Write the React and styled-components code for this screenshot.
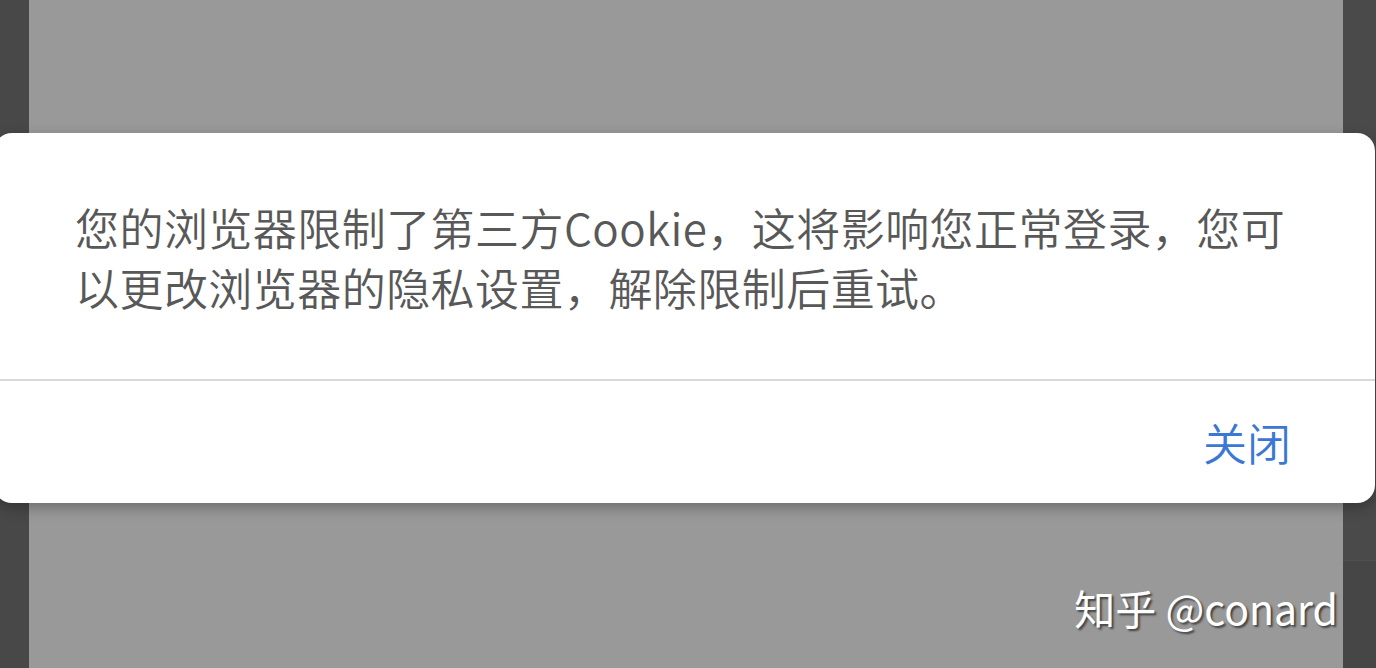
import React from 'react'
import styled, { createGlobalStyle } from 'styled-components'

const GlobalStyle = createGlobalStyle`
  html, body {
    margin: 0;
    padding: 0;
    background: #999999;
    overflow: hidden;
  }
  * {
    box-sizing: border-box;
  }
`

const App = () => {
  return (
    <>
      <GlobalStyle />
      <Screen>
        <SideBar />
        <Backdrop />
        <RightBar>
          <RightBarTop />
          <RightBarBottom />
        </RightBar>

        <Dialog>
          <Message>
            您的浏览器限制了第三方Cookie，这将影响您正常登录，您可以更改浏览器的隐私设置，解除限制后重试。
          </Message>
          <Divider />
          <Actions>
            <CloseButton>关闭</CloseButton>
          </Actions>
        </Dialog>

        <Watermark>知乎 @conard</Watermark>
      </Screen>
    </>
  )
}

export default App

const Screen = styled.div`
  position: relative;
  display: flex;
  width: 1376px;
  height: 668px;
  overflow: hidden;
  font-family: "Noto Sans CJK SC", "Noto Sans", sans-serif;
`

const SideBar = styled.div`
  width: 29px;
  background: #484848;
`

const Backdrop = styled.div`
  flex: 1;
  background: #999999;
`

const RightBar = styled.div`
  width: 33px;
  display: flex;
  flex-direction: column;
`

const RightBarTop = styled.div`
  height: 560px;
  background: #4a4a4a;
`

const RightBarBottom = styled.div`
  flex: 1;
  background: #464646;
  border-top: 1px solid #505050;
`

const Dialog = styled.div`
  position: absolute;
  top: 133px;
  left: -6px;
  width: 1381px;
  height: 370px;
  background: #ffffff;
  border-radius: 18px;
  box-shadow: 0 5px 14px rgba(0, 0, 0, 0.28);
  display: flex;
  flex-direction: column;
`

const Message = styled.div`
  padding: 64px 80px 0 81px;
  height: 246px;
  font-size: 44px;
  font-weight: 350;
  letter-spacing: 0.45px;
  line-height: 60px;
  color: #585858;
`

const Divider = styled.div`
  height: 2px;
  background: #d9d9d9;
`

const Actions = styled.div`
  flex: 1;
  display: flex;
  align-items: center;
  justify-content: flex-end;
  padding: 0 84px 0 0;
`

const CloseButton = styled.button`
  border: none;
  background: none;
  padding: 0;
  font-family: inherit;
  font-size: 44px;
  font-weight: 350;
  line-height: 60px;
  color: #3a78d4;
  cursor: pointer;
`

const Watermark = styled.div`
  position: absolute;
  right: 38px;
  top: 578px;
  font-size: 41px;
  line-height: 58px;
  color: #ffffff;
  text-shadow: 2px 2px 2px rgba(40, 40, 40, 0.75);
  white-space: nowrap;
`
